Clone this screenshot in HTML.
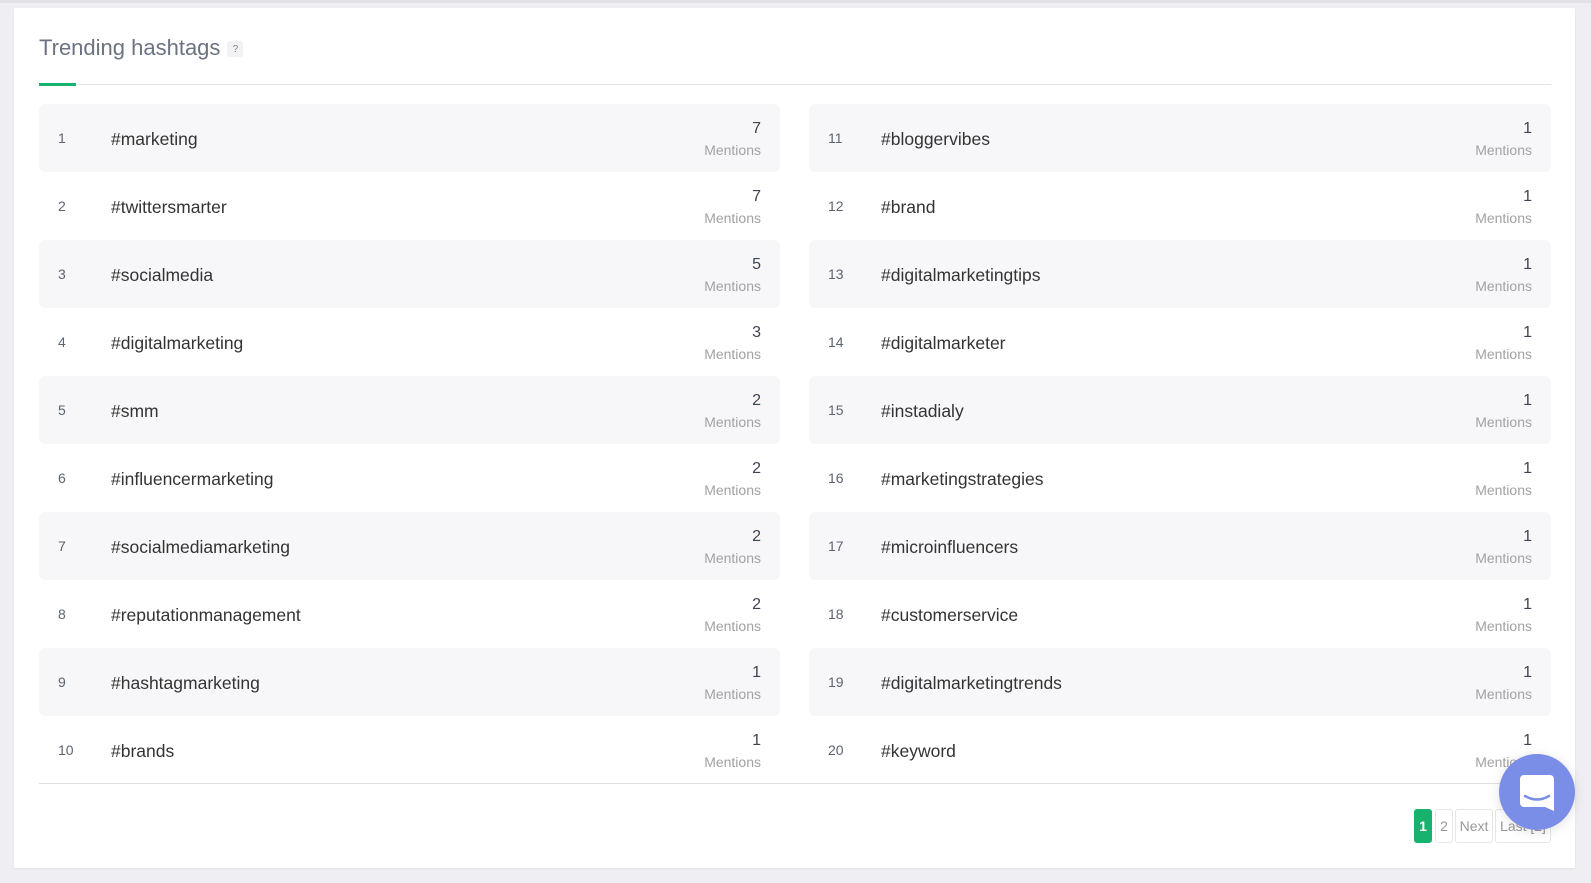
<!DOCTYPE html>
<html><head><meta charset="utf-8"><style>
body{margin:0;width:1591px;height:883px;background:#efeff3;font-family:"Liberation Sans",sans-serif;position:relative;overflow:hidden}
.top{position:absolute;left:0;right:0;top:0;height:3px;background:#e2e2e6}
.card{position:absolute;left:14px;top:8px;width:1561px;height:860px;background:#fff;box-shadow:0 1px 2px rgba(0,0,0,.06)}
.title{position:absolute;left:25px;top:27px;font-size:22px;color:#6b7381}
.q{display:inline-block;width:16px;height:16px;background:#f2f2f4;border-radius:3px;font-size:10px;color:#888;text-align:center;line-height:18px;vertical-align:middle;margin-left:7px}
.hr{position:absolute;left:25px;width:1512px;top:76px;height:1px;background:#e3e3e3}
.grn{position:absolute;left:25px;width:37px;top:75px;height:3px;background:#17b26e}
.col{position:absolute;top:96px;width:741px}
.row{height:68px;position:relative;border-radius:6px}
.row.g{background:#f7f7f9}
.n{position:absolute;left:19px;top:26px;font-size:14px;color:#5b6472}
.h{position:absolute;left:72px;top:25px;font-size:17.5px;color:#333}
.c{position:absolute;right:19px;top:16px;font-size:16px;color:#3d4450;text-align:right}
.m{position:absolute;right:19px;top:38px;font-size:14px;color:#a2a2a2}
.bl{position:absolute;left:25px;width:1512px;top:775px;height:1px;background:#e0e0e0}
.pg{position:absolute;top:801px;height:34px;border:1px solid #e6e6e6;border-radius:3px;box-sizing:border-box;font-size:14px;color:#999;line-height:32px;text-align:center}
.bub{position:absolute;left:1499px;top:754px;width:76px;height:76px;border-radius:50%;background:#7a8ee8;box-shadow:0 2px 12px rgba(0,0,0,.12)}
</style></head><body>
<div class="top"></div>
<div class="card">
<div class="title">Trending hashtags<span class="q">?</span></div>
<div class="hr"></div><div class="grn"></div>
<div class="col" style="left:25px">
<div class="row g"><span class="n">1</span><span class="h">#marketing</span><span class="c">7</span><span class="m">Mentions</span></div>
<div class="row"><span class="n">2</span><span class="h">#twittersmarter</span><span class="c">7</span><span class="m">Mentions</span></div>
<div class="row g"><span class="n">3</span><span class="h">#socialmedia</span><span class="c">5</span><span class="m">Mentions</span></div>
<div class="row"><span class="n">4</span><span class="h">#digitalmarketing</span><span class="c">3</span><span class="m">Mentions</span></div>
<div class="row g"><span class="n">5</span><span class="h">#smm</span><span class="c">2</span><span class="m">Mentions</span></div>
<div class="row"><span class="n">6</span><span class="h">#influencermarketing</span><span class="c">2</span><span class="m">Mentions</span></div>
<div class="row g"><span class="n">7</span><span class="h">#socialmediamarketing</span><span class="c">2</span><span class="m">Mentions</span></div>
<div class="row"><span class="n">8</span><span class="h">#reputationmanagement</span><span class="c">2</span><span class="m">Mentions</span></div>
<div class="row g"><span class="n">9</span><span class="h">#hashtagmarketing</span><span class="c">1</span><span class="m">Mentions</span></div>
<div class="row"><span class="n">10</span><span class="h">#brands</span><span class="c">1</span><span class="m">Mentions</span></div>
</div>
<div class="col" style="left:795px;width:742px">
<div class="row g"><span class="n">11</span><span class="h">#bloggervibes</span><span class="c">1</span><span class="m">Mentions</span></div>
<div class="row"><span class="n">12</span><span class="h">#brand</span><span class="c">1</span><span class="m">Mentions</span></div>
<div class="row g"><span class="n">13</span><span class="h">#digitalmarketingtips</span><span class="c">1</span><span class="m">Mentions</span></div>
<div class="row"><span class="n">14</span><span class="h">#digitalmarketer</span><span class="c">1</span><span class="m">Mentions</span></div>
<div class="row g"><span class="n">15</span><span class="h">#instadialy</span><span class="c">1</span><span class="m">Mentions</span></div>
<div class="row"><span class="n">16</span><span class="h">#marketingstrategies</span><span class="c">1</span><span class="m">Mentions</span></div>
<div class="row g"><span class="n">17</span><span class="h">#microinfluencers</span><span class="c">1</span><span class="m">Mentions</span></div>
<div class="row"><span class="n">18</span><span class="h">#customerservice</span><span class="c">1</span><span class="m">Mentions</span></div>
<div class="row g"><span class="n">19</span><span class="h">#digitalmarketingtrends</span><span class="c">1</span><span class="m">Mentions</span></div>
<div class="row"><span class="n">20</span><span class="h">#keyword</span><span class="c">1</span><span class="m">Mentions</span></div>
</div>
<div class="bl"></div>
<div class="pg" style="left:1400px;width:18px;background:#17b26e;border-color:#17b26e;color:#fff;font-weight:bold">1</div>
<div class="pg" style="left:1421px;width:18px">2</div>
<div class="pg" style="left:1441px;width:38px">Next</div>
<div class="pg" style="left:1481px;width:56px">Last [2]</div>
</div>
<div class="bub"><svg width="76" height="76" viewBox="0 0 76 76"><path d="M25 21h26a4 4 0 0 1 4 4v32l-9-4H25a4 4 0 0 1-4-4V25a4 4 0 0 1 4-4z" fill="#fff"/><path d="M26 42q12 7 24 0" stroke="#7a8ee8" stroke-width="2.5" fill="none" stroke-linecap="round"/></svg></div>
</body></html>
